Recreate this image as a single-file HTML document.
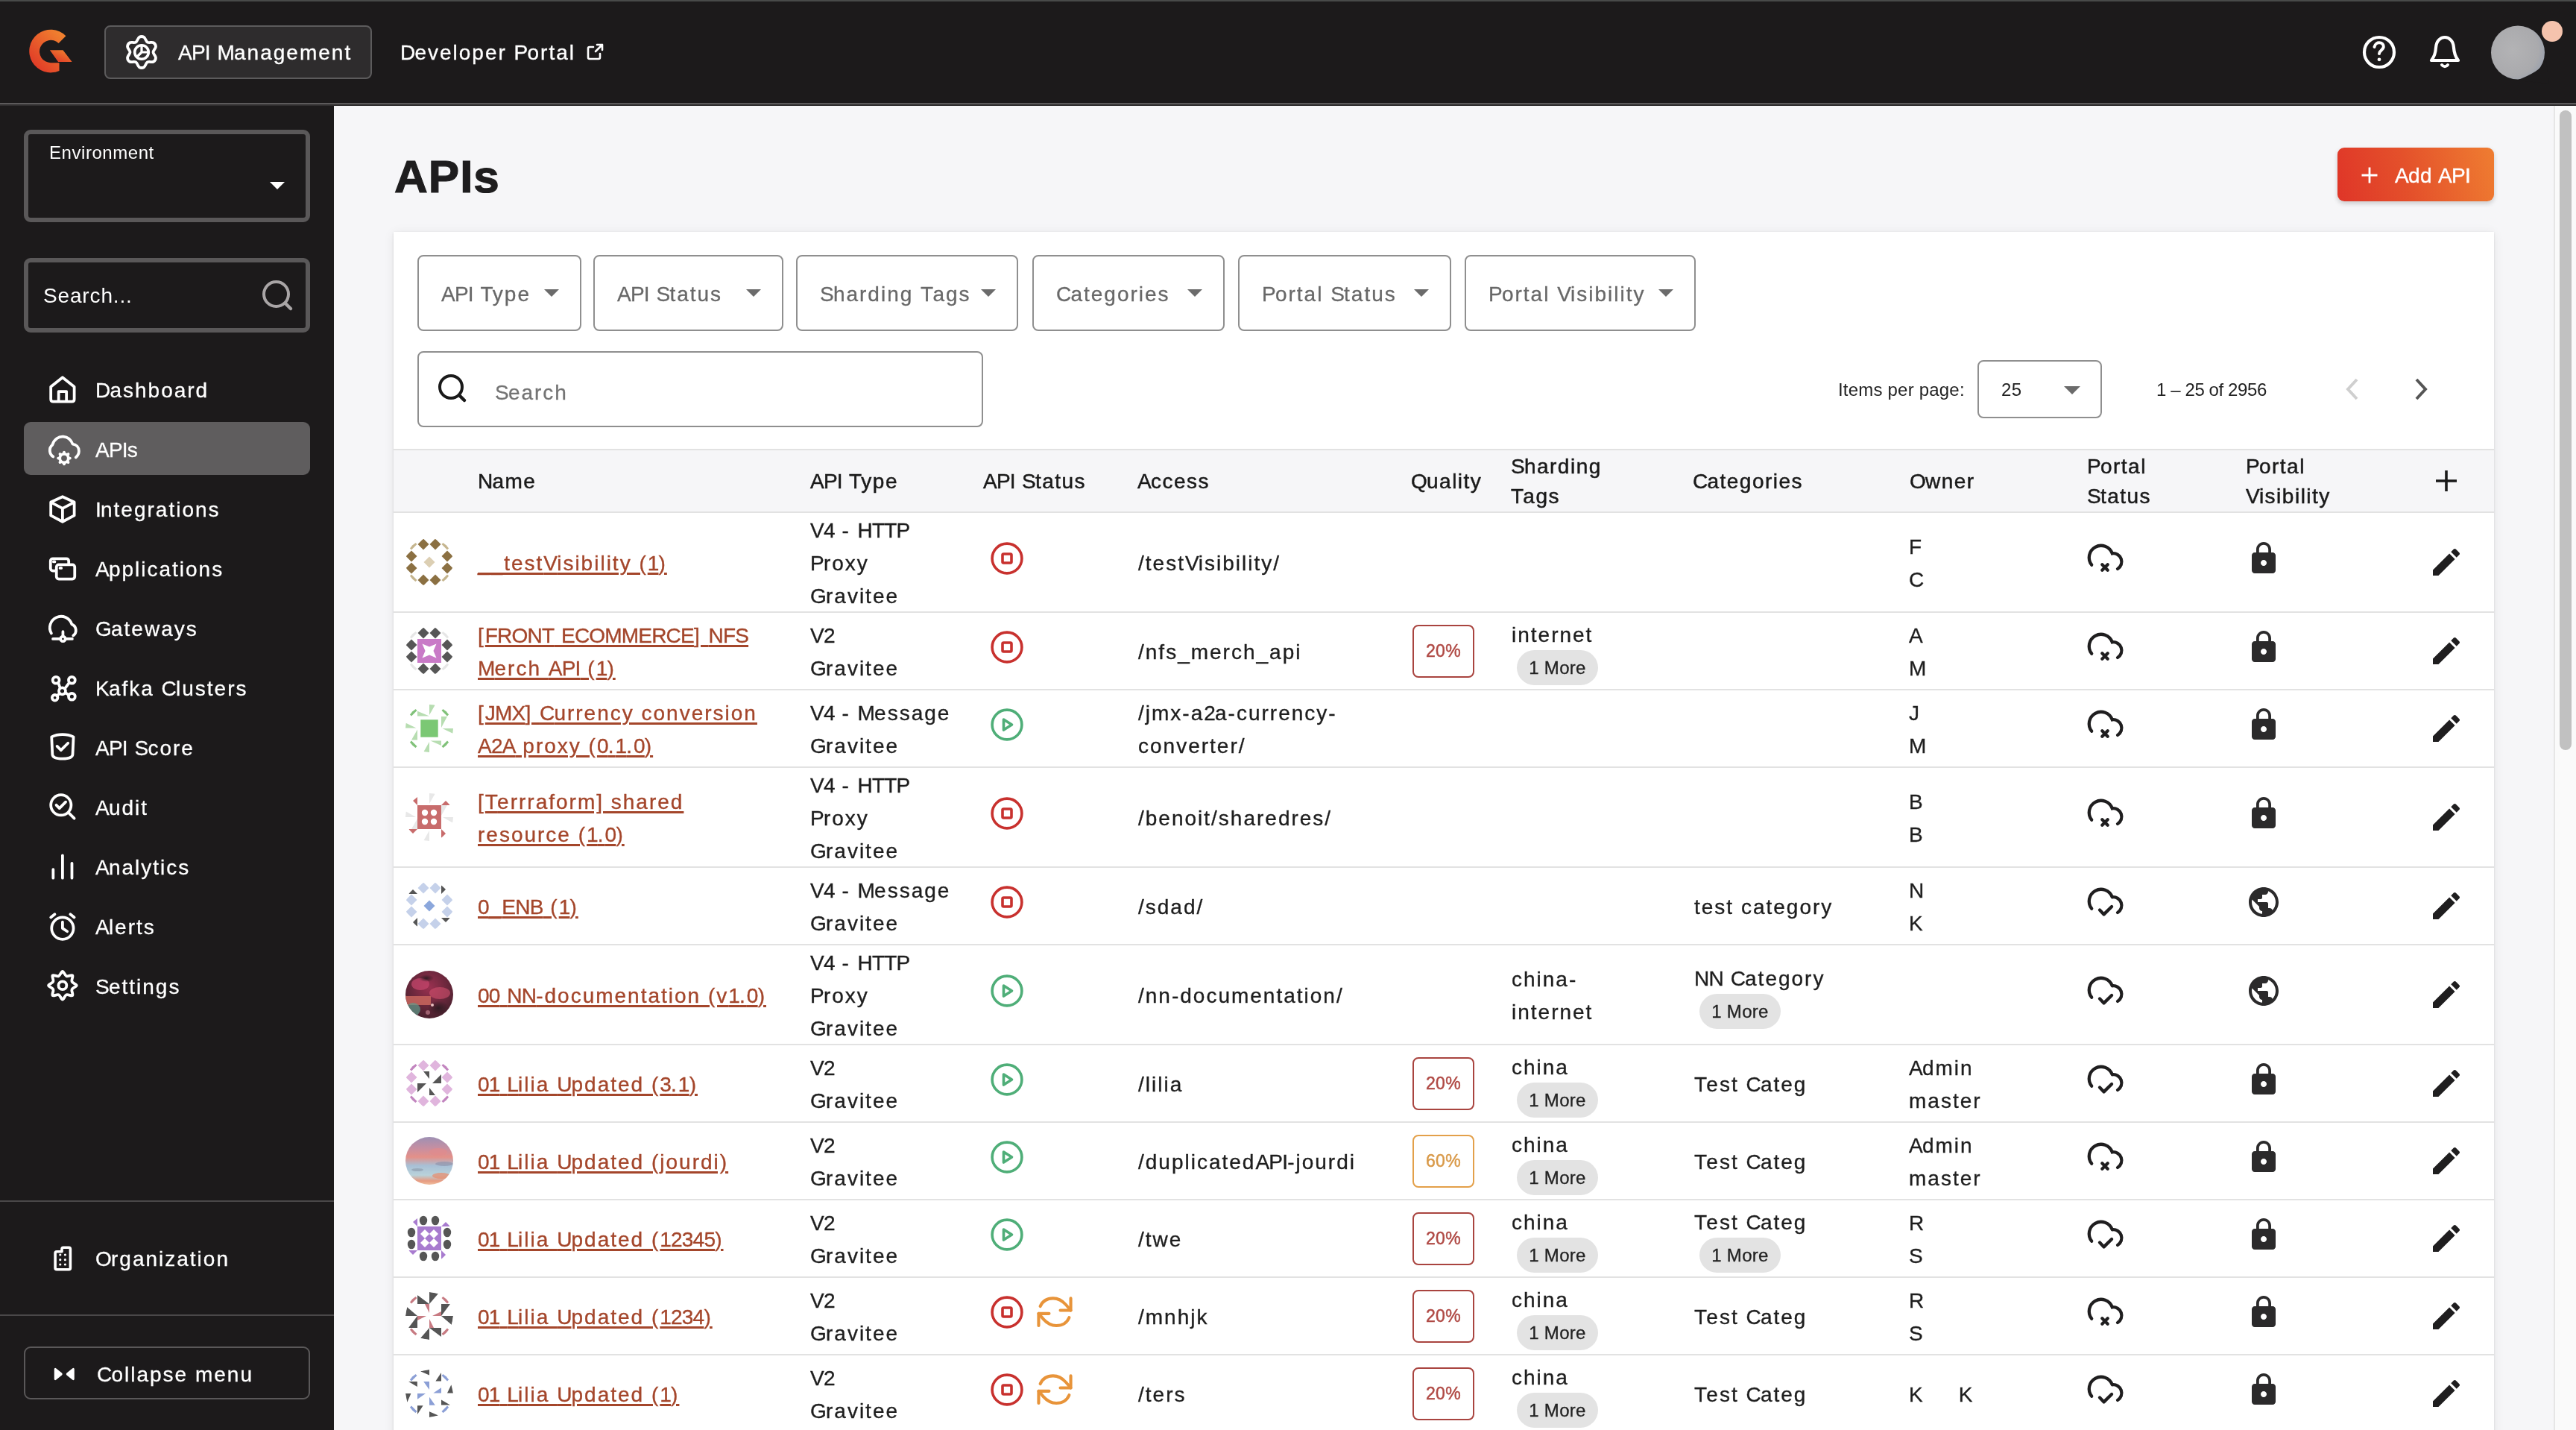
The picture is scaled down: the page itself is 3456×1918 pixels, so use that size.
<!DOCTYPE html><html><head><meta charset="utf-8"><style>
*{box-sizing:border-box;margin:0;padding:0}
html,body{width:3456px;height:1918px;overflow:hidden;background:#f6f6f8;font-family:'Liberation Sans',sans-serif;}
body>div{will-change:transform}
.a{position:absolute}
.t{position:absolute;white-space:nowrap;font-size:28px;line-height:44px;color:#1e1e1e;letter-spacing:2px;-webkit-text-stroke:0.35px currentColor}
.hd{position:absolute;white-space:nowrap;font-size:28px;line-height:40px;color:#1a1a1a;letter-spacing:1.5px;-webkit-text-stroke:0.5px #1a1a1a}
.nav{position:absolute;white-space:nowrap;font-size:28px;line-height:40px;color:#fff;letter-spacing:2px;-webkit-text-stroke:0.3px currentColor}
.lnk{color:#a4462b;text-decoration:underline;text-decoration-thickness:3px;text-underline-offset:3px}
.flt{position:absolute;top:342px;height:102px;border:2px solid #8f8f8f;border-radius:8px;background:#fff}
.flt>span{position:absolute;left:0;top:31px;font-size:28px;line-height:40px;color:#686868;letter-spacing:2px;white-space:nowrap;-webkit-text-stroke:0.3px #686868}
.car{position:absolute;width:0;height:0;border-left:10px solid transparent;border-right:10px solid transparent;border-top:10px solid #6b6b6b}
.qb{position:absolute;width:83px;height:71px;border:2px solid #b8403a;border-radius:8px;color:#b8403a;font-size:23px;line-height:67px;text-align:center;letter-spacing:0.3px;-webkit-text-stroke:0.5px currentColor}
.chip{position:absolute;height:47px;width:109px;border-radius:24px;background:#e3e3e3;color:#222;font-size:24px;line-height:47px;text-align:center;letter-spacing:0.3px;-webkit-text-stroke:0.3px #222}
.rb{position:absolute;left:528px;width:2818px;height:2px;background:#e2e2e2}
</style></head><body><div class="a" style="left:0;top:0;width:3456px;height:142px;background:#1c1a1b"></div>
<div class="a" style="left:0;top:0;width:3456px;height:2px;background:#484a49"></div>
<div class="a" style="left:0;top:138px;width:3456px;height:2px;background:#5c5a5b"></div>
<div class="a" style="left:0;top:140px;width:3456px;height:2px;background:#2f2d2e"></div>
<svg class="a" style="left:36px;top:38px" width="64" height="62" viewBox="0 0 64 62">
<defs><linearGradient id="lg" x1="0.85" y1="0.1" x2="0.15" y2="0.9"><stop offset="0" stop-color="#f0802f"/><stop offset="1" stop-color="#e03a27"/></linearGradient></defs>
<path fill="url(#lg)" d="M52.4 10.2 A28.8 28.8 0 1 0 43.5 57.0 L43.5 46.2 L32 46.2 A15.2 15.2 0 1 1 42.6 19.9 Z"/>
<path fill="url(#lg)" d="M30.9 29.2 L48.5 29.2 L60.6 45.1 L42.1 45.1 Z"/>
</svg>
<div class="a" style="left:140px;top:34px;width:359px;height:72px;border:2px solid #5c5b5c;border-radius:8px;background:#2e2c2d"></div>
<svg class="a" style="left:167px;top:46px" width="46" height="48" viewBox="0 0 46 48">
<path fill="none" stroke="#fff" stroke-width="3.8" stroke-linejoin="round" d="M19.82 3.95 C21.65 2.85 24.35 2.85 26.18 3.95 C28.00 5.05 28.65 9.36 30.75 10.58 C32.85 11.79 36.91 10.20 38.78 11.22 C40.64 12.25 42.00 14.60 41.95 16.73 C41.91 18.85 38.50 21.58 38.50 24.00 C38.50 26.42 41.91 29.15 41.95 31.27 C42.00 33.40 40.64 35.75 38.78 36.78 C36.91 37.80 32.85 36.21 30.75 37.42 C28.65 38.64 28.00 42.95 26.18 44.05 C24.35 45.15 21.65 45.15 19.82 44.05 C18.00 42.95 17.35 38.64 15.25 37.42 C13.15 36.21 9.09 37.80 7.22 36.78 C5.36 35.75 4.00 33.40 4.05 31.27 C4.09 29.15 7.50 26.42 7.50 24.00 C7.50 21.58 4.09 18.85 4.05 16.73 C4.00 14.60 5.36 12.25 7.22 11.22 C9.09 10.20 13.15 11.79 15.25 10.58 C17.35 9.36 18.00 5.05 19.82 3.95 Z"/>
<circle cx="23" cy="24" r="9.3" fill="none" stroke="#fff" stroke-width="3.6"/>
<path fill="none" stroke="#fff" stroke-width="3.2" d="M23 15 L23 24 L32 24 M23 24 L16.5 30.5"/>
</svg>
<div class="a" style="left:239px;top:51px;font-size:28px;line-height:40px;color:#fff;letter-spacing:2px;-webkit-text-stroke:0.35px #fff;white-space:nowrap"><span style="letter-spacing:-0.8px">API</span> <span style="letter-spacing:-0.8px">M</span>anagement</div>
<div class="a" style="left:537px;top:51px;font-size:28px;line-height:40px;color:#fff;letter-spacing:2px;-webkit-text-stroke:0.35px #fff;white-space:nowrap"><span style="letter-spacing:-0.8px">D</span>eveloper <span style="letter-spacing:-0.8px">P</span>ortal</div>
<svg class="a" style="left:786px;top:58px" width="26" height="24" viewBox="0 0 26 24">
<path fill="none" stroke="#fff" stroke-width="2.6" stroke-linecap="round" stroke-linejoin="round" d="M10 5 L5 5 Q3 5 3 7 L3 19 Q3 21 5 21 L17 21 Q19 21 19 19 L19 14 M13 11 L22 2 M15 2 L22 2 L22 9"/>
</svg>
<svg class="a" style="left:3168px;top:46px" width="48" height="48" viewBox="0 0 48 48">
<circle cx="24" cy="24" r="20" fill="none" stroke="#fff" stroke-width="4.2"/>
<path fill="none" stroke="#fff" stroke-width="4" stroke-linecap="round" stroke-linejoin="round" d="M17.5 17 C18.5 12.5 22 11 24.5 11.3 C28 11.6 30 14 29.8 17 C29.6 20.5 24.2 21.5 24 26"/>
<circle cx="24" cy="33.8" r="2.4" fill="#fff"/>
</svg>
<svg class="a" style="left:3256px;top:46px" width="48" height="48" viewBox="0 0 48 48">
<path fill="none" stroke="#fff" stroke-width="4.2" stroke-linejoin="round" d="M6 35 L42 35 C38 30 36.5 26 36 18 C35.5 9 30 4 24 4 C18 4 12.5 9 12 18 C11.5 26 10 30 6 35 Z"/>
<path fill="none" stroke="#fff" stroke-width="4" stroke-linecap="round" d="M20 41 C22.5 44 25.5 44 28 41"/>
</svg>
<svg class="a" style="left:3336px;top:30px" width="84" height="82" viewBox="0 0 84 82"><defs><radialGradient id="avg" cx="0.4" cy="0.45" r="0.6"><stop offset="0" stop-color="#b3b3b5"/><stop offset="0.8" stop-color="#aaaaad"/><stop offset="1" stop-color="#9ea3ad"/></radialGradient></defs><ellipse cx="42" cy="40.5" rx="36" ry="36" fill="url(#avg)"/><path d="M80 52 Q72 66 40 78 L84 82 Z" fill="#1c1a1b"/></svg>
<div class="a" style="left:3410px;top:28px;width:28px;height:28px;border-radius:50%;background:#f5c3ad"></div>
<div class="a" style="left:0;top:142px;width:448px;height:1776px;background:#1c1a1b"></div>
<div class="a" style="left:32px;top:174px;width:384px;height:124px;border:6px solid #5a5859;border-radius:9px"></div>
<div class="a" style="left:66px;top:190px;font-size:24px;line-height:30px;color:#fff;letter-spacing:0.55px;white-space:nowrap">Environment</div>
<div class="car" style="left:362px;top:244px;border-top-color:#fff"></div>
<div class="a" style="left:32px;top:346px;width:384px;height:100px;border:6px solid #5a5859;border-radius:9px"></div>
<div class="a" style="left:58px;top:377px;font-size:28px;line-height:40px;color:#fff;letter-spacing:0.85px;white-space:nowrap">Search...</div>
<svg class="a" style="left:348px;top:372px" width="48" height="48" viewBox="0 0 48 48">
<circle cx="22.5" cy="22.5" r="16.5" fill="none" stroke="#a9a5a6" stroke-width="4"/>
<path stroke="#a9a5a6" stroke-width="4.5" stroke-linecap="round" d="M35 35 L42 42"/>
</svg>
<div class="a" style="left:32px;top:566px;width:384px;height:71px;border-radius:9px;background:#5f5d5e"></div>
<svg class="a" style="left:64px;top:502px" width="44" height="42" viewBox="-1 -1 42 40" overflow="visible"><path fill="none" stroke="#fff" stroke-width="3.6" stroke-linecap="round" stroke-linejoin="round" d="M3 15 L18 3 L33 15 L33 31 Q33 34 30 34 L6 34 Q3 34 3 31 Z M13 34 L13 21 L23 21 L23 34"/></svg>
<div class="nav" style="left:128px;top:504px"><span style="letter-spacing:-0.8px">D</span>ashboard</div>
<svg class="a" style="left:64px;top:582px" width="44" height="42" viewBox="-1 -1 42 40" overflow="visible"><path fill="none" stroke="#fff" stroke-width="3.6" stroke-linecap="round" stroke-linejoin="round" d="M6 28 C1 25 0 17 5 13 C7 6 13 2 19 2.5 C25 3 29 7 31 12 C35.5 12.5 39 16 39 21 C39 24.5 37.5 27 35 29"/><circle cx="20" cy="30" r="5.5" fill="none" stroke="#fff" stroke-width="3.6" stroke-linecap="round" stroke-linejoin="round"/><path fill="none" stroke="#fff" stroke-width="3.6" stroke-linecap="round" stroke-linejoin="round" d="M20 22.5 L20 24 M20 36 L20 37.5 M12.5 30 L14 30 M26 30 L27.5 30 M14.7 24.7 L15.8 25.8 M24.2 34.2 L25.3 35.3 M14.7 35.3 L15.8 34.2 M24.2 25.8 L25.3 24.7"/></svg>
<div class="nav" style="left:128px;top:584px"><span style="letter-spacing:-0.8px">API</span>s</div>
<svg class="a" style="left:64px;top:662px" width="44" height="42" viewBox="-1 -1 42 40" overflow="visible"><path fill="none" stroke="#fff" stroke-width="3.6" stroke-linecap="round" stroke-linejoin="round" d="M18 3 L33 10 L33 27 L18 35 L3 27 L3 10 Z M3 10 L18 18 L33 10 M18 18 L18 35"/></svg>
<div class="nav" style="left:128px;top:664px"><span style="letter-spacing:-0.8px">I</span>ntegrations</div>
<svg class="a" style="left:64px;top:742px" width="44" height="42" viewBox="-1 -1 42 40" overflow="visible"><rect x="2.6" y="5.9" width="23.3" height="15.5" rx="3" fill="none" stroke="#fff" stroke-width="3.6" stroke-linecap="round" stroke-linejoin="round"/><rect x="10.2" y="13.7" width="23.4" height="18.2" rx="3" fill="#1c1a1b" stroke="#fff" stroke-width="3.6"/><path fill="none" stroke="#fff" stroke-width="3.6" stroke-linecap="round" stroke-linejoin="round" d="M6.5 9.9 L8 9.9 M14.8 18 L16.4 18"/></svg>
<div class="nav" style="left:128px;top:744px"><span style="letter-spacing:-0.8px">A</span>pplications</div>
<svg class="a" style="left:64px;top:822px" width="44" height="42" viewBox="-1 -1 42 40" overflow="visible"><path fill="none" stroke="#fff" stroke-width="3.6" stroke-linecap="round" stroke-linejoin="round" d="M3.7 25.2 A14.4 14.4 0 1 1 29.8 13.4 A8.53 8.53 0 0 1 31.7 28.1 M5.7 32.3 L15.3 32.3 M21.7 32.3 L30.4 32.3 M18.5 23 L18.5 29.2"/><circle cx="18.5" cy="32.3" r="3.1" fill="none" stroke="#fff" stroke-width="3.6" stroke-linecap="round" stroke-linejoin="round"/></svg>
<div class="nav" style="left:128px;top:824px"><span style="letter-spacing:-0.8px">G</span>ateways</div>
<svg class="a" style="left:64px;top:902px" width="44" height="42" viewBox="-1 -1 42 40" overflow="visible"><circle cx="9.6" cy="8.8" r="4.2" fill="none" stroke="#fff" stroke-width="3.6" stroke-linecap="round" stroke-linejoin="round"/><circle cx="29.9" cy="8.8" r="4.2" fill="none" stroke="#fff" stroke-width="3.6" stroke-linecap="round" stroke-linejoin="round"/><circle cx="8.2" cy="31.2" r="3.6" fill="none" stroke="#fff" stroke-width="3.6" stroke-linecap="round" stroke-linejoin="round"/><circle cx="29.9" cy="29.8" r="4.2" fill="none" stroke="#fff" stroke-width="3.6" stroke-linecap="round" stroke-linejoin="round"/><circle cx="17.6" cy="22.6" r="4.3" fill="none" stroke="#fff" stroke-width="3.6" stroke-linecap="round" stroke-linejoin="round"/><path fill="none" stroke="#fff" stroke-width="3.6" stroke-linecap="round" stroke-linejoin="round" d="M12.5 12 L15 18.8 M26.8 11.8 L20.9 19.6 M11 29 L14.2 25.6 M26.1 27.8 L21.6 24.8"/></svg>
<div class="nav" style="left:128px;top:904px"><span style="letter-spacing:-0.8px">K</span>afka <span style="letter-spacing:-0.8px">C</span>lusters</div>
<svg class="a" style="left:64px;top:982px" width="44" height="42" viewBox="-1 -1 42 40" overflow="visible"><path fill="none" stroke="#fff" stroke-width="3.6" stroke-linecap="round" stroke-linejoin="round" d="M4 5 C12 1 24 1 32 5 L31 27 C31 31 27 33 18 33 C9 33 5 31 5 27 Z"/><path fill="none" stroke="#fff" stroke-width="3.6" stroke-linecap="round" stroke-linejoin="round" d="M11 17 L16 22 L25 13"/></svg>
<div class="nav" style="left:128px;top:984px"><span style="letter-spacing:-0.8px">API</span> <span style="letter-spacing:-0.8px">S</span>core</div>
<svg class="a" style="left:64px;top:1062px" width="44" height="42" viewBox="-1 -1 42 40" overflow="visible"><circle cx="16" cy="16" r="13" fill="none" stroke="#fff" stroke-width="3.6" stroke-linecap="round" stroke-linejoin="round"/><path fill="none" stroke="#fff" stroke-width="3.6" stroke-linecap="round" stroke-linejoin="round" d="M10 16 L14 20 L22 12 M26 26 L33 33"/></svg>
<div class="nav" style="left:128px;top:1064px"><span style="letter-spacing:-0.8px">A</span>udit</div>
<svg class="a" style="left:64px;top:1142px" width="44" height="42" viewBox="-1 -1 42 40" overflow="visible"><path fill="none" stroke="#fff" stroke-width="3.6" stroke-linecap="round" stroke-linejoin="round" d="M6 22 L6 33 M18 4 L18 33 M30 14 L30 33"/></svg>
<div class="nav" style="left:128px;top:1144px"><span style="letter-spacing:-0.8px">A</span>nalytics</div>
<svg class="a" style="left:64px;top:1222px" width="44" height="42" viewBox="-1 -1 42 40" overflow="visible"><circle cx="18" cy="21" r="14" fill="none" stroke="#fff" stroke-width="3.6" stroke-linecap="round" stroke-linejoin="round"/><path fill="none" stroke="#fff" stroke-width="3.6" stroke-linecap="round" stroke-linejoin="round" d="M18 13 L18 21 L24 25 M3 7 L8 3 M33 7 L28 3"/></svg>
<div class="nav" style="left:128px;top:1224px"><span style="letter-spacing:-0.8px">A</span>lerts</div>
<svg class="a" style="left:64px;top:1302px" width="44" height="42" viewBox="-1 -1 42 40" overflow="visible"><path fill="none" stroke="#fff" stroke-width="3.6" stroke-linecap="round" stroke-linejoin="round" d="M18.00 -0.20 C19.66 -0.20 20.85 4.91 22.97 5.79 C25.10 6.67 29.56 3.90 30.73 5.07 C31.90 6.24 29.13 10.70 30.01 12.83 C30.89 14.95 36.00 16.14 36.00 17.80 C36.00 19.46 30.89 20.65 30.01 22.77 C29.13 24.90 31.90 29.36 30.73 30.53 C29.56 31.70 25.10 28.93 22.97 29.81 C20.85 30.69 19.66 35.80 18.00 35.80 C16.34 35.80 15.15 30.69 13.03 29.81 C10.90 28.93 6.44 31.70 5.27 30.53 C4.10 29.36 6.87 24.90 5.99 22.77 C5.11 20.65 0.00 19.46 0.00 17.80 C-0.00 16.14 5.11 14.95 5.99 12.83 C6.87 10.70 4.10 6.24 5.27 5.07 C6.44 3.90 10.90 6.67 13.03 5.79 C15.15 4.91 16.34 -0.20 18.00 -0.20 Z"/><circle cx="18" cy="17.8" r="5.2" fill="none" stroke="#fff" stroke-width="3.6" stroke-linecap="round" stroke-linejoin="round"/></svg>
<div class="nav" style="left:128px;top:1304px"><span style="letter-spacing:-0.8px">S</span>ettings</div>
<div class="a" style="left:0;top:1610px;width:448px;height:2px;background:#4a4849"></div>
<div class="a" style="left:0;top:1763px;width:448px;height:2px;background:#4a4849"></div>
<svg class="a" style="left:70px;top:1668px" width="28" height="42" viewBox="0 0 28 42"><path fill="none" stroke="#fff" stroke-width="3.6" stroke-linecap="round" stroke-linejoin="round" d="M4.1 12.8 Q4.1 10.8 6.1 10.8 L13 10.8 L13 7.3 Q13 5.3 15 5.3 L22.4 5.3 Q24.4 5.3 24.4 7.3 L24.4 32.8 Q24.4 34.8 22.4 34.8 L6.1 34.8 Q4.1 34.8 4.1 32.8 Z"/><g fill="#fff"><circle cx="10.8" cy="15" r="1.6"/><circle cx="17.4" cy="15" r="1.6"/><circle cx="10.8" cy="21.7" r="1.6"/><circle cx="17.4" cy="21.7" r="1.6"/><circle cx="10.8" cy="28" r="1.6"/><circle cx="17.4" cy="28" r="1.6"/></g></svg>
<div class="nav" style="left:128px;top:1669px"><span style="letter-spacing:-0.8px">O</span>rganization</div>
<div class="a" style="left:32px;top:1806px;width:384px;height:71px;border:2px solid #5a5859;border-radius:9px"></div>
<svg class="a" style="left:72px;top:1834px" width="30" height="18" viewBox="0 0 30 18"><path fill="#fff" stroke="#fff" stroke-width="1.5" stroke-linejoin="round" d="M1.5 2.5 Q1.5 1 3 2 L10.5 8 Q11.5 9 10.5 10 L3 16 Q1.5 17 1.5 15.5 Z M27 2.5 Q27 1 25.5 2 L18 8 Q17 9 18 10 L25.5 16 Q27 17 27 15.5 Z"/></svg>
<div class="nav" style="left:130px;top:1824px"><span style="letter-spacing:-0.8px">C</span>ollapse menu</div>
<div class="a" style="left:448px;top:142px;width:3008px;height:1776px;background:#f6f6f8"></div>
<div class="a" style="left:529px;top:197px;font-size:62px;line-height:80px;font-weight:700;color:#1e1d1e;letter-spacing:1px;-webkit-text-stroke:1.2px #1e1d1e;white-space:nowrap">APIs</div>
<div class="a" style="left:3136px;top:198px;width:210px;height:72px;border-radius:9px;background:linear-gradient(75deg,#df3528 0%,#e4512b 45%,#ef7d31 100%);box-shadow:0 3px 6px rgba(0,0,0,0.18)"></div>
<svg class="a" style="left:3166px;top:222px" width="26" height="26" viewBox="0 0 26 26"><path stroke="#fff" stroke-width="2.8" d="M13 2.5 L13 23.5 M2.5 13 L23.5 13"/></svg>
<div class="a" style="left:3213px;top:216px;font-size:28px;line-height:40px;color:#fff;letter-spacing:0.3px;-webkit-text-stroke:0.4px #fff;white-space:nowrap"><span style="letter-spacing:-0.6px">A</span>dd <span style="letter-spacing:-0.6px">API</span></div>
<div class="a" style="left:528px;top:311px;width:2818px;height:1700px;background:#fff;box-shadow:0 1px 3px rgba(0,0,0,0.12),0 2px 14px rgba(0,0,0,0.08)"></div>
<div class="flt" style="left:560px;width:220px"><span style="left:30px"><span style="letter-spacing:-0.8px">API</span> <span style="letter-spacing:-0.8px">T</span>ype</span><div class="car" style="left:168px;top:44px"></div></div>
<div class="flt" style="left:796px;width:255px"><span style="left:30px"><span style="letter-spacing:-0.8px">API</span> <span style="letter-spacing:-0.8px">S</span>tatus</span><div class="car" style="left:203px;top:44px"></div></div>
<div class="flt" style="left:1068px;width:298px"><span style="left:30px"><span style="letter-spacing:-0.8px">S</span>harding <span style="letter-spacing:-0.8px">T</span>ags</span><div class="car" style="left:246px;top:44px"></div></div>
<div class="flt" style="left:1385px;width:258px"><span style="left:30px"><span style="letter-spacing:-0.8px">C</span>ategories</span><div class="car" style="left:206px;top:44px"></div></div>
<div class="flt" style="left:1661px;width:286px"><span style="left:30px"><span style="letter-spacing:-0.8px">P</span>ortal <span style="letter-spacing:-0.8px">S</span>tatus</span><div class="car" style="left:234px;top:44px"></div></div>
<div class="flt" style="left:1965px;width:310px"><span style="left:30px"><span style="letter-spacing:-0.8px">P</span>ortal <span style="letter-spacing:-0.8px">V</span>isibility</span><div class="car" style="left:258px;top:44px"></div></div>
<div class="a" style="left:560px;top:471px;width:759px;height:102px;border:2px solid #8f8f8f;border-radius:8px;background:#fff"></div>
<svg class="a" style="left:584px;top:498px" width="48" height="48" viewBox="0 0 48 48"><circle cx="21" cy="21" r="15" fill="none" stroke="#1a1a1a" stroke-width="4"/><path stroke="#1a1a1a" stroke-width="4.5" stroke-linecap="round" d="M32 32 L39 39"/></svg>
<div class="a" style="left:664px;top:507px;font-size:28px;line-height:40px;color:#747474;letter-spacing:2px;-webkit-text-stroke:0.3px #747474;white-space:nowrap"><span style="letter-spacing:-0.8px">S</span>earch</div>
<div class="a" style="left:2466px;top:506px;font-size:24px;line-height:34px;color:#222;letter-spacing:0.2px;white-space:nowrap">Items per page:</div>
<div class="a" style="left:2653px;top:483px;width:167px;height:78px;border:2px solid #8f8f8f;border-radius:8px"></div>
<div class="a" style="left:2685px;top:506px;font-size:24px;line-height:34px;color:#222;letter-spacing:0.5px;white-space:nowrap">25</div>
<div class="car" style="left:2769px;top:518px;border-left-width:11px;border-right-width:11px;border-top-width:11px;border-top-color:#6b6b6b"></div>
<div class="a" style="left:2893px;top:506px;font-size:24px;line-height:34px;color:#222;letter-spacing:-0.4px;white-space:nowrap">1 – 25 of 2956</div>
<svg class="a" style="left:3144px;top:505px" width="24" height="34" viewBox="0 0 24 34"><path fill="none" stroke="#cfcfcf" stroke-width="4" d="M18 4 L6 17 L18 30"/></svg>
<svg class="a" style="left:3236px;top:505px" width="24" height="34" viewBox="0 0 24 34"><path fill="none" stroke="#555" stroke-width="4" d="M6 4 L18 17 L6 30"/></svg>
<div class="a" style="left:528px;top:602px;width:2818px;height:86px;background:#f6f6f8"></div>
<div class="rb" style="top:602px"></div>
<div class="rb" style="top:686px"></div>
<div class="hd" style="left:641px;top:626px"><span style="letter-spacing:-0.8px">N</span>ame</div>
<div class="hd" style="left:1087px;top:626px"><span style="letter-spacing:-0.8px">API</span> <span style="letter-spacing:-0.8px">T</span>ype</div>
<div class="hd" style="left:1319px;top:626px"><span style="letter-spacing:-0.8px">API</span> <span style="letter-spacing:-0.8px">S</span>tatus</div>
<div class="hd" style="left:1526px;top:626px"><span style="letter-spacing:-0.8px">A</span>ccess</div>
<div class="hd" style="left:1893px;top:626px"><span style="letter-spacing:-0.8px">Q</span>uality</div>
<div class="hd" style="left:2027px;top:606px"><span style="letter-spacing:-0.8px">S</span>harding<br><span style="letter-spacing:-0.8px">T</span>ags</div>
<div class="hd" style="left:2271px;top:626px"><span style="letter-spacing:-0.8px">C</span>ategories</div>
<div class="hd" style="left:2562px;top:626px"><span style="letter-spacing:-0.8px">O</span>wner</div>
<div class="hd" style="left:2800px;top:606px"><span style="letter-spacing:-0.8px">P</span>ortal<br><span style="letter-spacing:-0.8px">S</span>tatus</div>
<div class="hd" style="left:3013px;top:606px"><span style="letter-spacing:-0.8px">P</span>ortal<br><span style="letter-spacing:-0.8px">V</span>isibility</div>
<svg class="a" style="left:3267px;top:630px" width="30" height="30" viewBox="0 0 30 30"><path stroke="#1a1a1a" stroke-width="3.6" d="M15 1 L15 29 M1 15 L29 15"/></svg>
<div class="rb" style="top:820px"></div>
<div class="rb" style="top:924px"></div>
<div class="rb" style="top:1028px"></div>
<div class="rb" style="top:1162px"></div>
<div class="rb" style="top:1266px"></div>
<div class="rb" style="top:1400px"></div>
<div class="rb" style="top:1504px"></div>
<div class="rb" style="top:1608px"></div>
<div class="rb" style="top:1712px"></div>
<div class="rb" style="top:1816px"></div>
<svg class="a" style="left:544px;top:722px" width="64" height="64" viewBox="0 0 64 64"><defs><clipPath id="c0"><circle cx="32" cy="32" r="32"/></clipPath></defs><g clip-path="url(#c0)"><path fill="#8b7042" d="M24 0.5 L31.5 8 L24 15.5 L16.5 8 Z"/><path fill="#8b7042" d="M40 0.5 L47.5 8 L40 15.5 L32.5 8 Z"/><path fill="#8b7042" d="M8 16.5 L15.5 24 L8 31.5 L0.5 24 Z"/><path fill="#8b7042" d="M8 32.5 L15.5 40 L8 47.5 L0.5 40 Z"/><path fill="#8b7042" d="M56 16.5 L63.5 24 L56 31.5 L48.5 24 Z"/><path fill="#8b7042" d="M56 32.5 L63.5 40 L56 47.5 L48.5 40 Z"/><path fill="#8b7042" d="M24 48.5 L31.5 56 L24 63.5 L16.5 56 Z"/><path fill="#8b7042" d="M40 48.5 L47.5 56 L40 63.5 L32.5 56 Z"/><path fill="#c5b58e" d="M8 0.5 L15.5 8 L8 15.5 L0.5 8 Z"/><path fill="#c5b58e" d="M56 0.5 L63.5 8 L56 15.5 L48.5 8 Z"/><path fill="#c5b58e" d="M8 48.5 L15.5 56 L8 63.5 L0.5 56 Z"/><path fill="#c5b58e" d="M56 48.5 L63.5 56 L56 63.5 L48.5 56 Z"/><path fill="#dccfb3" d="M32 24.5 L39.5 32 L32 39.5 L24.5 32 Z"/></g></svg>
<div class="t lnk" style="left:641px;top:734.0px">__test<span style="letter-spacing:-0.8px">V</span>isibility (<span style="letter-spacing:-0.8px">1</span>)</div>
<div class="t" style="left:1087px;top:690.0px;"><span style="letter-spacing:-0.8px">V4</span> - <span style="letter-spacing:-0.8px">HTTP</span><br><span style="letter-spacing:-0.8px">P</span>roxy<br><span style="letter-spacing:-0.8px">G</span>ravitee</div>
<svg class="a" style="left:1327px;top:725px" width="48" height="48" viewBox="0 0 48 48"><circle cx="24" cy="24" r="19.9" fill="none" stroke="#c8312e" stroke-width="3.6"/><rect x="18" y="18" width="12" height="12" rx="1.5" fill="none" stroke="#c8312e" stroke-width="3.6"/></svg>
<div class="t" style="left:1527px;top:734.0px;">/test<span style="letter-spacing:-0.8px">V</span>isibility/</div>
<div class="t" style="left:2561px;top:712.0px;"><span style="letter-spacing:-0.8px">F</span><br><span style="letter-spacing:-0.8px">C</span></div>
<svg class="a" style="left:2798px;top:726px" width="52" height="48" viewBox="0 0 52 48"><g fill="none" stroke="#1f1e1f" stroke-width="4.3" stroke-linecap="round"><path d="M8.2 31.7 A16 16 0 1 1 35.8 16.3 A11.2 11.2 0 0 1 43 37"/><path d="M22.3 31.3 L29.7 38.7 M29.7 31.3 L22.3 38.7"/></g></svg>
<svg class="a" style="left:3013px;top:725px" width="48" height="48" viewBox="0 0 24 24"><path fill="#2b2a2b" d="M18 8h-1V6c0-2.76-2.24-5-5-5S7 3.24 7 6v2H6c-1.1 0-2 .9-2 2v10c0 1.1.9 2 2 2h12c1.1 0 2-.9 2-2V10c0-1.1-.9-2-2-2zm-6 9c-1.1 0-2-.9-2-2s.9-2 2-2 2 .9 2 2-.9 2-2 2zm3.1-9H8.9V6c0-1.71 1.39-3.1 3.1-3.1 1.71 0 3.1 1.39 3.1 3.1v2z"/></svg>
<svg class="a" style="left:3258px;top:730px" width="48" height="48" viewBox="0 0 24 24"><path fill="#1f1e1f" d="M3 17.25V21h3.75L17.81 9.94l-3.75-3.75L3 17.25zM20.71 7.04c.39-.39.39-1.02 0-1.41l-2.34-2.34c-.39-.39-1.02-.39-1.41 0l-1.83 1.83 3.75 3.75 1.83-1.83z"/></svg>
<svg class="a" style="left:544px;top:841px" width="64" height="64" viewBox="0 0 64 64"><defs><clipPath id="c1"><circle cx="32" cy="32" r="32"/></clipPath></defs><g clip-path="url(#c1)"><path fill="#565656" d="M24 0.5 L31.5 8 L24 15.5 L16.5 8 Z"/><path fill="#565656" d="M40 0.5 L47.5 8 L40 15.5 L32.5 8 Z"/><path fill="#565656" d="M8 16.5 L15.5 24 L8 31.5 L0.5 24 Z"/><path fill="#565656" d="M8 32.5 L15.5 40 L8 47.5 L0.5 40 Z"/><path fill="#565656" d="M56 16.5 L63.5 24 L56 31.5 L48.5 24 Z"/><path fill="#565656" d="M56 32.5 L63.5 40 L56 47.5 L48.5 40 Z"/><path fill="#565656" d="M24 48.5 L31.5 56 L24 63.5 L16.5 56 Z"/><path fill="#565656" d="M40 48.5 L47.5 56 L40 63.5 L32.5 56 Z"/><path fill="#e6e6e6" d="M8 0.5 L15.5 8 L8 15.5 L0.5 8 Z"/><path fill="#e6e6e6" d="M56 0.5 L63.5 8 L56 15.5 L48.5 8 Z"/><path fill="#e6e6e6" d="M8 48.5 L15.5 56 L8 63.5 L0.5 56 Z"/><path fill="#e6e6e6" d="M56 48.5 L63.5 56 L56 63.5 L48.5 56 Z"/><rect x="16" y="16" width="32" height="32" fill="#c97ac7"/><path fill="#fff" d="M22.5 22.5 L32 26.5 L41.5 22.5 L37.5 32 L41.5 41.5 L32 37.5 L22.5 41.5 L26.5 32 Z"/></g></svg>
<div class="t lnk" style="left:641px;top:831.0px">[<span style="letter-spacing:-0.8px">FRONT</span> <span style="letter-spacing:-0.8px">ECOMMERCE</span>] <span style="letter-spacing:-0.8px">NFS</span><br><span style="letter-spacing:-0.8px">M</span>erch <span style="letter-spacing:-0.8px">API</span> (<span style="letter-spacing:-0.8px">1</span>)</div>
<div class="t" style="left:1087px;top:831.0px;"><span style="letter-spacing:-0.8px">V2</span><br><span style="letter-spacing:-0.8px">G</span>ravitee</div>
<svg class="a" style="left:1327px;top:844px" width="48" height="48" viewBox="0 0 48 48"><circle cx="24" cy="24" r="19.9" fill="none" stroke="#c8312e" stroke-width="3.6"/><rect x="18" y="18" width="12" height="12" rx="1.5" fill="none" stroke="#c8312e" stroke-width="3.6"/></svg>
<div class="t" style="left:1527px;top:853.0px;">/nfs_merch_api</div>
<div class="qb" style="left:1895px;top:837.5px;border-color:#a9443f;color:#b04a45">20%</div>
<div class="t" style="left:2028px;top:829.5px">internet</div><div class="chip" style="left:2035px;top:871.5px">1 More</div>
<div class="t" style="left:2561px;top:831.0px;"><span style="letter-spacing:-0.8px">A</span><br><span style="letter-spacing:-0.8px">M</span></div>
<svg class="a" style="left:2798px;top:845px" width="52" height="48" viewBox="0 0 52 48"><g fill="none" stroke="#1f1e1f" stroke-width="4.3" stroke-linecap="round"><path d="M8.2 31.7 A16 16 0 1 1 35.8 16.3 A11.2 11.2 0 0 1 43 37"/><path d="M22.3 31.3 L29.7 38.7 M29.7 31.3 L22.3 38.7"/></g></svg>
<svg class="a" style="left:3013px;top:844px" width="48" height="48" viewBox="0 0 24 24"><path fill="#2b2a2b" d="M18 8h-1V6c0-2.76-2.24-5-5-5S7 3.24 7 6v2H6c-1.1 0-2 .9-2 2v10c0 1.1.9 2 2 2h12c1.1 0 2-.9 2-2V10c0-1.1-.9-2-2-2zm-6 9c-1.1 0-2-.9-2-2s.9-2 2-2 2 .9 2 2-.9 2-2 2zm3.1-9H8.9V6c0-1.71 1.39-3.1 3.1-3.1 1.71 0 3.1 1.39 3.1 3.1v2z"/></svg>
<svg class="a" style="left:3258px;top:849px" width="48" height="48" viewBox="0 0 24 24"><path fill="#1f1e1f" d="M3 17.25V21h3.75L17.81 9.94l-3.75-3.75L3 17.25zM20.71 7.04c.39-.39.39-1.02 0-1.41l-2.34-2.34c-.39-.39-1.02-.39-1.41 0l-1.83 1.83 3.75 3.75 1.83-1.83z"/></svg>
<svg class="a" style="left:544px;top:945px" width="64" height="64" viewBox="0 0 64 64"><defs><clipPath id="c2"><circle cx="32" cy="32" r="32"/></clipPath></defs><g clip-path="url(#c2)"><path fill="#b7ddb1" d="M16 8.8 L16 15.6 L32 15.6 Z"/><path fill="#b7ddb1" d="M32 0 L40 0 L32 14 Z"/><path fill="#b7ddb1" d="M48 16 L56 16 L48 31 Z"/><path fill="#b7ddb1" d="M49.5 32 L64 32 L64 39 Z"/><path fill="#b7ddb1" d="M33.5 48.4 L48 48.4 L48 55 Z"/><path fill="#b7ddb1" d="M24 64 L32 50 L32 64 Z"/><path fill="#b7ddb1" d="M8 47.6 L16 33.5 L16 47.6 Z"/><path fill="#b7ddb1" d="M0 24.5 L14.5 31.5 L0 31.5 Z"/><path fill="#80c179" d="M8 0.5 L15.5 8 L8 15.5 L0.5 8 Z"/><path fill="#80c179" d="M56 0.5 L63.5 8 L56 15.5 L48.5 8 Z"/><path fill="#80c179" d="M8 48.5 L15.5 56 L8 63.5 L0.5 56 Z"/><path fill="#80c179" d="M56 48.5 L63.5 56 L56 63.5 L48.5 56 Z"/><rect x="20.3" y="20.3" width="23.4" height="23.4" fill="#7bc874"/></g></svg>
<div class="t lnk" style="left:641px;top:935.0px">[<span style="letter-spacing:-0.8px">JMX</span>] <span style="letter-spacing:-0.8px">C</span>urrency conversion<br><span style="letter-spacing:-0.8px">A2A</span> proxy (<span style="letter-spacing:-0.8px">0</span>.<span style="letter-spacing:-0.8px">1</span>.<span style="letter-spacing:-0.8px">0</span>)</div>
<div class="t" style="left:1087px;top:935.0px;"><span style="letter-spacing:-0.8px">V4</span> - <span style="letter-spacing:-0.8px">M</span>essage<br><span style="letter-spacing:-0.8px">G</span>ravitee</div>
<svg class="a" style="left:1327px;top:948px" width="48" height="48" viewBox="0 0 48 48"><circle cx="24" cy="24" r="19.9" fill="none" stroke="#4fae78" stroke-width="3.6"/><path d="M19.5 17 L30.5 24 L19.5 31 Z" fill="none" stroke="#4fae78" stroke-width="3.6" stroke-linejoin="round"/></svg>
<div class="t" style="left:1527px;top:935.0px;">/jmx-a<span style="letter-spacing:-0.8px">2</span>a-currency-<br>converter/</div>
<div class="t" style="left:2561px;top:935.0px;"><span style="letter-spacing:-0.8px">J</span><br><span style="letter-spacing:-0.8px">M</span></div>
<svg class="a" style="left:2798px;top:949px" width="52" height="48" viewBox="0 0 52 48"><g fill="none" stroke="#1f1e1f" stroke-width="4.3" stroke-linecap="round"><path d="M8.2 31.7 A16 16 0 1 1 35.8 16.3 A11.2 11.2 0 0 1 43 37"/><path d="M22.3 31.3 L29.7 38.7 M29.7 31.3 L22.3 38.7"/></g></svg>
<svg class="a" style="left:3013px;top:948px" width="48" height="48" viewBox="0 0 24 24"><path fill="#2b2a2b" d="M18 8h-1V6c0-2.76-2.24-5-5-5S7 3.24 7 6v2H6c-1.1 0-2 .9-2 2v10c0 1.1.9 2 2 2h12c1.1 0 2-.9 2-2V10c0-1.1-.9-2-2-2zm-6 9c-1.1 0-2-.9-2-2s.9-2 2-2 2 .9 2 2-.9 2-2 2zm3.1-9H8.9V6c0-1.71 1.39-3.1 3.1-3.1 1.71 0 3.1 1.39 3.1 3.1v2z"/></svg>
<svg class="a" style="left:3258px;top:953px" width="48" height="48" viewBox="0 0 24 24"><path fill="#1f1e1f" d="M3 17.25V21h3.75L17.81 9.94l-3.75-3.75L3 17.25zM20.71 7.04c.39-.39.39-1.02 0-1.41l-2.34-2.34c-.39-.39-1.02-.39-1.41 0l-1.83 1.83 3.75 3.75 1.83-1.83z"/></svg>
<svg class="a" style="left:544px;top:1064px" width="64" height="64" viewBox="0 0 64 64"><defs><clipPath id="c3"><circle cx="32" cy="32" r="32"/></clipPath></defs><g clip-path="url(#c3)"><path fill="#e8e8e8" d="M32 0 L40 0 L32 14 Z"/><path fill="#e8e8e8" d="M48 16 L48 30 L56 16 Z"/><path fill="#e8e8e8" d="M64 32 L64 40 L50 32 Z"/><path fill="#e8e8e8" d="M48 48 L34 40 L48 40 Z"/><path fill="#e8e8e8" d="M32 64 L24 64 L32 50 Z"/><path fill="#e8e8e8" d="M16 48 L16 34 L8 48 Z"/><path fill="#e8e8e8" d="M0 32 L0 24 L14 32 Z"/><path fill="#e8e8e8" d="M16 16 L30 24 L16 24 Z"/><path fill="#c86c6c" d="M16 5 L16 16 L10 10 Z"/><path fill="#c86c6c" d="M48 16 L60 16 L54 10 Z"/><path fill="#c86c6c" d="M48 48 L48 60 L54 54 Z"/><path fill="#c86c6c" d="M16 48 L4 48 L10 54 Z"/><rect x="16" y="16" width="32" height="32" fill="#c86c6c"/><g fill="#fff"><circle cx="26" cy="26" r="4.2"/><circle cx="38" cy="26" r="4.2"/><circle cx="26" cy="38" r="4.2"/><circle cx="38" cy="38" r="4.2"/></g></g></svg>
<div class="t lnk" style="left:641px;top:1054.0px">[<span style="letter-spacing:-0.8px">T</span>errraform] shared<br>resource (<span style="letter-spacing:-0.8px">1</span>.<span style="letter-spacing:-0.8px">0</span>)</div>
<div class="t" style="left:1087px;top:1032.0px;"><span style="letter-spacing:-0.8px">V4</span> - <span style="letter-spacing:-0.8px">HTTP</span><br><span style="letter-spacing:-0.8px">P</span>roxy<br><span style="letter-spacing:-0.8px">G</span>ravitee</div>
<svg class="a" style="left:1327px;top:1067px" width="48" height="48" viewBox="0 0 48 48"><circle cx="24" cy="24" r="19.9" fill="none" stroke="#c8312e" stroke-width="3.6"/><rect x="18" y="18" width="12" height="12" rx="1.5" fill="none" stroke="#c8312e" stroke-width="3.6"/></svg>
<div class="t" style="left:1527px;top:1076.0px;">/benoit/sharedres/</div>
<div class="t" style="left:2561px;top:1054.0px;"><span style="letter-spacing:-0.8px">B</span><br><span style="letter-spacing:-0.8px">B</span></div>
<svg class="a" style="left:2798px;top:1068px" width="52" height="48" viewBox="0 0 52 48"><g fill="none" stroke="#1f1e1f" stroke-width="4.3" stroke-linecap="round"><path d="M8.2 31.7 A16 16 0 1 1 35.8 16.3 A11.2 11.2 0 0 1 43 37"/><path d="M22.3 31.3 L29.7 38.7 M29.7 31.3 L22.3 38.7"/></g></svg>
<svg class="a" style="left:3013px;top:1067px" width="48" height="48" viewBox="0 0 24 24"><path fill="#2b2a2b" d="M18 8h-1V6c0-2.76-2.24-5-5-5S7 3.24 7 6v2H6c-1.1 0-2 .9-2 2v10c0 1.1.9 2 2 2h12c1.1 0 2-.9 2-2V10c0-1.1-.9-2-2-2zm-6 9c-1.1 0-2-.9-2-2s.9-2 2-2 2 .9 2 2-.9 2-2 2zm3.1-9H8.9V6c0-1.71 1.39-3.1 3.1-3.1 1.71 0 3.1 1.39 3.1 3.1v2z"/></svg>
<svg class="a" style="left:3258px;top:1072px" width="48" height="48" viewBox="0 0 24 24"><path fill="#1f1e1f" d="M3 17.25V21h3.75L17.81 9.94l-3.75-3.75L3 17.25zM20.71 7.04c.39-.39.39-1.02 0-1.41l-2.34-2.34c-.39-.39-1.02-.39-1.41 0l-1.83 1.83 3.75 3.75 1.83-1.83z"/></svg>
<svg class="a" style="left:544px;top:1183px" width="64" height="64" viewBox="0 0 64 64"><defs><clipPath id="c4"><circle cx="32" cy="32" r="32"/></clipPath></defs><g clip-path="url(#c4)"><path fill="#c5d1ea" d="M24 0.5 L31.5 8 L24 15.5 L16.5 8 Z"/><path fill="#c5d1ea" d="M40 0.5 L47.5 8 L40 15.5 L32.5 8 Z"/><path fill="#c5d1ea" d="M8 16.5 L15.5 24 L8 31.5 L0.5 24 Z"/><path fill="#c5d1ea" d="M8 32.5 L15.5 40 L8 47.5 L0.5 40 Z"/><path fill="#c5d1ea" d="M56 16.5 L63.5 24 L56 31.5 L48.5 24 Z"/><path fill="#c5d1ea" d="M56 32.5 L63.5 40 L56 47.5 L48.5 40 Z"/><path fill="#c5d1ea" d="M24 48.5 L31.5 56 L24 63.5 L16.5 56 Z"/><path fill="#c5d1ea" d="M40 48.5 L47.5 56 L40 63.5 L32.5 56 Z"/><path fill="#8ba7dc" d="M32 24.5 L39.5 32 L32 39.5 L24.5 32 Z"/><path fill="#555" d="M4 16 L16 16 L10 10 Z"/><path fill="#555" d="M48 4 L48 16 L54 10 Z"/><path fill="#555" d="M48 48 L60 48 L54 54 Z"/><path fill="#555" d="M16 48 L16 60 L10 54 Z"/></g></svg>
<div class="t lnk" style="left:641px;top:1195.0px"><span style="letter-spacing:-0.8px">0</span>_<span style="letter-spacing:-0.8px">ENB</span> (<span style="letter-spacing:-0.8px">1</span>)</div>
<div class="t" style="left:1087px;top:1173.0px;"><span style="letter-spacing:-0.8px">V4</span> - <span style="letter-spacing:-0.8px">M</span>essage<br><span style="letter-spacing:-0.8px">G</span>ravitee</div>
<svg class="a" style="left:1327px;top:1186px" width="48" height="48" viewBox="0 0 48 48"><circle cx="24" cy="24" r="19.9" fill="none" stroke="#c8312e" stroke-width="3.6"/><rect x="18" y="18" width="12" height="12" rx="1.5" fill="none" stroke="#c8312e" stroke-width="3.6"/></svg>
<div class="t" style="left:1527px;top:1195.0px;">/sdad/</div>
<div class="t" style="left:2273px;top:1195.0px">test category</div>
<div class="t" style="left:2561px;top:1173.0px;"><span style="letter-spacing:-0.8px">N</span><br><span style="letter-spacing:-0.8px">K</span></div>
<svg class="a" style="left:2798px;top:1187px" width="52" height="48" viewBox="0 0 52 48"><g fill="none" stroke="#1f1e1f" stroke-width="4.3" stroke-linecap="round" stroke-linejoin="round"><path d="M8.2 31.7 A16 16 0 1 1 35.8 16.3 A11.2 11.2 0 0 1 43 37"/><path d="M19 33.6 L24.6 39.4 L35.1 29"/></g></svg>
<svg class="a" style="left:3013px;top:1186px" width="48" height="48" viewBox="0 0 24 24"><path fill="#2b2a2b" d="M12 2C6.48 2 2 6.48 2 12s4.48 10 10 10 10-4.48 10-10S17.52 2 12 2zm-1 17.93c-3.95-.49-7-3.85-7-7.93 0-.62.08-1.21.21-1.79L9 15v1c0 1.1.9 2 2 2v1.93zm6.9-2.54c-.26-.81-1-1.39-1.9-1.39h-1v-3c0-.55-.45-1-1-1H8v-2h2c.55 0 1-.45 1-1V7h2c1.1 0 2-.9 2-2v-.41c2.93 1.19 5 4.06 5 7.41 0 2.08-.8 3.97-2.1 5.39z"/></svg>
<svg class="a" style="left:3258px;top:1191px" width="48" height="48" viewBox="0 0 24 24"><path fill="#1f1e1f" d="M3 17.25V21h3.75L17.81 9.94l-3.75-3.75L3 17.25zM20.71 7.04c.39-.39.39-1.02 0-1.41l-2.34-2.34c-.39-.39-1.02-.39-1.41 0l-1.83 1.83 3.75 3.75 1.83-1.83z"/></svg>
<svg class="a" style="left:544px;top:1302px" width="64" height="64" viewBox="0 0 64 64"><defs><clipPath id="c5"><circle cx="32" cy="32" r="32"/></clipPath></defs><g clip-path="url(#c5)"><defs><radialGradient id="p6a" cx="0.5" cy="0.35" r="0.6"><stop offset="0" stop-color="#9a3050"/><stop offset="1" stop-color="#4e2230"/></radialGradient><radialGradient id="p6b" cx="0.5" cy="0.5" r="0.5"><stop offset="0" stop-color="#2a1a20" stop-opacity="0.9"/><stop offset="1" stop-color="#2a1a20" stop-opacity="0"/></radialGradient></defs><rect width="64" height="64" fill="url(#p6a)"/><ellipse cx="20" cy="18" rx="12" ry="8" fill="#c8476e" opacity="0.7"/><ellipse cx="46" cy="30" rx="14" ry="8" fill="#d0506e" opacity="0.6"/><rect x="0" y="34" width="34" height="12" fill="#c9665e" opacity="0.85"/><ellipse cx="10" cy="52" rx="10" ry="9" fill="#5f9c8c" opacity="0.7"/><ellipse cx="44" cy="50" r="12" rx="14" ry="10" fill="url(#p6b)"/><ellipse cx="28" cy="10" rx="10" ry="5" fill="url(#p6b)"/><circle cx="36" cy="46" r="2" fill="#e8c0c0"/><circle cx="30" cy="56" r="3" fill="#b07080" opacity="0.8"/></g></svg>
<div class="t lnk" style="left:641px;top:1314.0px"><span style="letter-spacing:-0.8px">00</span> <span style="letter-spacing:-0.8px">NN</span>-documentation (v<span style="letter-spacing:-0.8px">1</span>.<span style="letter-spacing:-0.8px">0</span>)</div>
<div class="t" style="left:1087px;top:1270.0px;"><span style="letter-spacing:-0.8px">V4</span> - <span style="letter-spacing:-0.8px">HTTP</span><br><span style="letter-spacing:-0.8px">P</span>roxy<br><span style="letter-spacing:-0.8px">G</span>ravitee</div>
<svg class="a" style="left:1327px;top:1305px" width="48" height="48" viewBox="0 0 48 48"><circle cx="24" cy="24" r="19.9" fill="none" stroke="#4fae78" stroke-width="3.6"/><path d="M19.5 17 L30.5 24 L19.5 31 Z" fill="none" stroke="#4fae78" stroke-width="3.6" stroke-linejoin="round"/></svg>
<div class="t" style="left:1527px;top:1314.0px;">/nn-documentation/</div>
<div class="t" style="left:2028px;top:1292.0px">china-<br>internet</div>
<div class="t" style="left:2273px;top:1290.5px"><span style="letter-spacing:-0.8px">NN</span> <span style="letter-spacing:-0.8px">C</span>ategory</div><div class="chip" style="left:2280px;top:1332.5px">1 More</div>
<svg class="a" style="left:2798px;top:1306px" width="52" height="48" viewBox="0 0 52 48"><g fill="none" stroke="#1f1e1f" stroke-width="4.3" stroke-linecap="round" stroke-linejoin="round"><path d="M8.2 31.7 A16 16 0 1 1 35.8 16.3 A11.2 11.2 0 0 1 43 37"/><path d="M19 33.6 L24.6 39.4 L35.1 29"/></g></svg>
<svg class="a" style="left:3013px;top:1305px" width="48" height="48" viewBox="0 0 24 24"><path fill="#2b2a2b" d="M12 2C6.48 2 2 6.48 2 12s4.48 10 10 10 10-4.48 10-10S17.52 2 12 2zm-1 17.93c-3.95-.49-7-3.85-7-7.93 0-.62.08-1.21.21-1.79L9 15v1c0 1.1.9 2 2 2v1.93zm6.9-2.54c-.26-.81-1-1.39-1.9-1.39h-1v-3c0-.55-.45-1-1-1H8v-2h2c.55 0 1-.45 1-1V7h2c1.1 0 2-.9 2-2v-.41c2.93 1.19 5 4.06 5 7.41 0 2.08-.8 3.97-2.1 5.39z"/></svg>
<svg class="a" style="left:3258px;top:1310px" width="48" height="48" viewBox="0 0 24 24"><path fill="#1f1e1f" d="M3 17.25V21h3.75L17.81 9.94l-3.75-3.75L3 17.25zM20.71 7.04c.39-.39.39-1.02 0-1.41l-2.34-2.34c-.39-.39-1.02-.39-1.41 0l-1.83 1.83 3.75 3.75 1.83-1.83z"/></svg>
<svg class="a" style="left:544px;top:1421px" width="64" height="64" viewBox="0 0 64 64"><defs><clipPath id="c6"><circle cx="32" cy="32" r="32"/></clipPath></defs><g clip-path="url(#c6)"><path fill="#e0b5dd" d="M24 0.5 L31.5 8 L24 15.5 L16.5 8 Z"/><path fill="#e0b5dd" d="M40 0.5 L47.5 8 L40 15.5 L32.5 8 Z"/><path fill="#e0b5dd" d="M8 16.5 L15.5 24 L8 31.5 L0.5 24 Z"/><path fill="#e0b5dd" d="M8 32.5 L15.5 40 L8 47.5 L0.5 40 Z"/><path fill="#e0b5dd" d="M56 16.5 L63.5 24 L56 31.5 L48.5 24 Z"/><path fill="#e0b5dd" d="M56 32.5 L63.5 40 L56 47.5 L48.5 40 Z"/><path fill="#e0b5dd" d="M24 48.5 L31.5 56 L24 63.5 L16.5 56 Z"/><path fill="#e0b5dd" d="M40 48.5 L47.5 56 L40 63.5 L32.5 56 Z"/><path fill="#c285bf" d="M8 0.5 L15.5 8 L8 15.5 L0.5 8 Z"/><path fill="#c285bf" d="M56 0.5 L63.5 8 L56 15.5 L48.5 8 Z"/><path fill="#c285bf" d="M8 48.5 L15.5 56 L8 63.5 L0.5 56 Z"/><path fill="#c285bf" d="M56 48.5 L63.5 56 L56 63.5 L48.5 56 Z"/><path fill="#555" d="M24 16 L32 16 L32 26 Z"/><path fill="#555" d="M48 20 L48 32 L36 32 Z"/><path fill="#555" d="M40 48 L32 48 L32 38 Z"/><path fill="#555" d="M16 44 L16 32 L28 32 Z"/></g></svg>
<div class="t lnk" style="left:641px;top:1433.0px"><span style="letter-spacing:-0.8px">01</span> <span style="letter-spacing:-0.8px">L</span>ilia <span style="letter-spacing:-0.8px">U</span>pdated (<span style="letter-spacing:-0.8px">3</span>.<span style="letter-spacing:-0.8px">1</span>)</div>
<div class="t" style="left:1087px;top:1411.0px;"><span style="letter-spacing:-0.8px">V2</span><br><span style="letter-spacing:-0.8px">G</span>ravitee</div>
<svg class="a" style="left:1327px;top:1424px" width="48" height="48" viewBox="0 0 48 48"><circle cx="24" cy="24" r="19.9" fill="none" stroke="#4fae78" stroke-width="3.6"/><path d="M19.5 17 L30.5 24 L19.5 31 Z" fill="none" stroke="#4fae78" stroke-width="3.6" stroke-linejoin="round"/></svg>
<div class="t" style="left:1527px;top:1433.0px;">/lilia</div>
<div class="qb" style="left:1895px;top:1417.5px;border-color:#a9443f;color:#b04a45">20%</div>
<div class="t" style="left:2028px;top:1409.5px">china</div><div class="chip" style="left:2035px;top:1451.5px">1 More</div>
<div class="t" style="left:2273px;top:1433.0px"><span style="letter-spacing:-0.8px">T</span>est <span style="letter-spacing:-0.8px">C</span>ateg</div>
<div class="t" style="left:2561px;top:1411.0px;"><span style="letter-spacing:-0.8px">A</span>dmin<br>master</div>
<svg class="a" style="left:2798px;top:1425px" width="52" height="48" viewBox="0 0 52 48"><g fill="none" stroke="#1f1e1f" stroke-width="4.3" stroke-linecap="round" stroke-linejoin="round"><path d="M8.2 31.7 A16 16 0 1 1 35.8 16.3 A11.2 11.2 0 0 1 43 37"/><path d="M19 33.6 L24.6 39.4 L35.1 29"/></g></svg>
<svg class="a" style="left:3013px;top:1424px" width="48" height="48" viewBox="0 0 24 24"><path fill="#2b2a2b" d="M18 8h-1V6c0-2.76-2.24-5-5-5S7 3.24 7 6v2H6c-1.1 0-2 .9-2 2v10c0 1.1.9 2 2 2h12c1.1 0 2-.9 2-2V10c0-1.1-.9-2-2-2zm-6 9c-1.1 0-2-.9-2-2s.9-2 2-2 2 .9 2 2-.9 2-2 2zm3.1-9H8.9V6c0-1.71 1.39-3.1 3.1-3.1 1.71 0 3.1 1.39 3.1 3.1v2z"/></svg>
<svg class="a" style="left:3258px;top:1429px" width="48" height="48" viewBox="0 0 24 24"><path fill="#1f1e1f" d="M3 17.25V21h3.75L17.81 9.94l-3.75-3.75L3 17.25zM20.71 7.04c.39-.39.39-1.02 0-1.41l-2.34-2.34c-.39-.39-1.02-.39-1.41 0l-1.83 1.83 3.75 3.75 1.83-1.83z"/></svg>
<svg class="a" style="left:544px;top:1525px" width="64" height="64" viewBox="0 0 64 64"><defs><clipPath id="c7"><circle cx="32" cy="32" r="32"/></clipPath></defs><g clip-path="url(#c7)"><defs><linearGradient id="p8" x1="0" y1="0" x2="0" y2="1"><stop offset="0" stop-color="#9d90b4"/><stop offset="0.25" stop-color="#c98fa0"/><stop offset="0.42" stop-color="#e49088"/><stop offset="0.6" stop-color="#a8c0d6"/><stop offset="0.8" stop-color="#b9d2da"/><stop offset="0.92" stop-color="#e79a80"/><stop offset="1" stop-color="#f0c0a0"/></linearGradient></defs><rect width="64" height="64" fill="url(#p8)"/><ellipse cx="44" cy="20" rx="12" ry="5" fill="#e28a8a" opacity="0.6"/><ellipse cx="52" cy="36" rx="12" ry="3" fill="#8a90a8" opacity="0.6"/><ellipse cx="16" cy="44" rx="8" ry="2" fill="#8a98a8" opacity="0.6"/><ellipse cx="48" cy="52" rx="12" ry="4" fill="#e98a6a" opacity="0.7"/></g></svg>
<div class="t lnk" style="left:641px;top:1537.0px"><span style="letter-spacing:-0.8px">01</span> <span style="letter-spacing:-0.8px">L</span>ilia <span style="letter-spacing:-0.8px">U</span>pdated (jourdi)</div>
<div class="t" style="left:1087px;top:1515.0px;"><span style="letter-spacing:-0.8px">V2</span><br><span style="letter-spacing:-0.8px">G</span>ravitee</div>
<svg class="a" style="left:1327px;top:1528px" width="48" height="48" viewBox="0 0 48 48"><circle cx="24" cy="24" r="19.9" fill="none" stroke="#4fae78" stroke-width="3.6"/><path d="M19.5 17 L30.5 24 L19.5 31 Z" fill="none" stroke="#4fae78" stroke-width="3.6" stroke-linejoin="round"/></svg>
<div class="t" style="left:1527px;top:1537.0px;">/duplicated<span style="letter-spacing:-0.8px">API</span>-jourdi</div>
<div class="qb" style="left:1895px;top:1521.5px;border-color:#e3a04a;color:#d99a4a">60%</div>
<div class="t" style="left:2028px;top:1513.5px">china</div><div class="chip" style="left:2035px;top:1555.5px">1 More</div>
<div class="t" style="left:2273px;top:1537.0px"><span style="letter-spacing:-0.8px">T</span>est <span style="letter-spacing:-0.8px">C</span>ateg</div>
<div class="t" style="left:2561px;top:1515.0px;"><span style="letter-spacing:-0.8px">A</span>dmin<br>master</div>
<svg class="a" style="left:2798px;top:1529px" width="52" height="48" viewBox="0 0 52 48"><g fill="none" stroke="#1f1e1f" stroke-width="4.3" stroke-linecap="round"><path d="M8.2 31.7 A16 16 0 1 1 35.8 16.3 A11.2 11.2 0 0 1 43 37"/><path d="M22.3 31.3 L29.7 38.7 M29.7 31.3 L22.3 38.7"/></g></svg>
<svg class="a" style="left:3013px;top:1528px" width="48" height="48" viewBox="0 0 24 24"><path fill="#2b2a2b" d="M18 8h-1V6c0-2.76-2.24-5-5-5S7 3.24 7 6v2H6c-1.1 0-2 .9-2 2v10c0 1.1.9 2 2 2h12c1.1 0 2-.9 2-2V10c0-1.1-.9-2-2-2zm-6 9c-1.1 0-2-.9-2-2s.9-2 2-2 2 .9 2 2-.9 2-2 2zm3.1-9H8.9V6c0-1.71 1.39-3.1 3.1-3.1 1.71 0 3.1 1.39 3.1 3.1v2z"/></svg>
<svg class="a" style="left:3258px;top:1533px" width="48" height="48" viewBox="0 0 24 24"><path fill="#1f1e1f" d="M3 17.25V21h3.75L17.81 9.94l-3.75-3.75L3 17.25zM20.71 7.04c.39-.39.39-1.02 0-1.41l-2.34-2.34c-.39-.39-1.02-.39-1.41 0l-1.83 1.83 3.75 3.75 1.83-1.83z"/></svg>
<svg class="a" style="left:544px;top:1629px" width="64" height="64" viewBox="0 0 64 64"><defs><clipPath id="c8"><circle cx="32" cy="32" r="32"/></clipPath></defs><g clip-path="url(#c8)"><ellipse cx="24" cy="8" rx="5.2" ry="6.3" fill="#565656"/><ellipse cx="40" cy="8" rx="5.2" ry="6.3" fill="#565656"/><ellipse cx="8" cy="24" rx="5.2" ry="6.3" fill="#565656"/><ellipse cx="8" cy="40" rx="5.2" ry="6.3" fill="#565656"/><ellipse cx="56" cy="24" rx="5.2" ry="6.3" fill="#565656"/><ellipse cx="56" cy="40" rx="5.2" ry="6.3" fill="#565656"/><ellipse cx="24" cy="56" rx="5.2" ry="6.3" fill="#565656"/><ellipse cx="40" cy="56" rx="5.2" ry="6.3" fill="#565656"/><path fill="#a87bcf" d="M16 5 L16 16 L10 10 Z"/><path fill="#a87bcf" d="M48 16 L60 16 L54 10 Z"/><path fill="#a87bcf" d="M48 48 L48 60 L54 54 Z"/><path fill="#a87bcf" d="M16 48 L4 48 L10 54 Z"/><rect x="16" y="16" width="32" height="32" fill="#a87bcf"/><path fill="#fff" d="M26 20 L32 26 L26 32 L20 26 Z"/><path fill="#fff" d="M38 20 L44 26 L38 32 L32 26 Z"/><path fill="#fff" d="M26 32 L32 38 L26 44 L20 38 Z"/><path fill="#fff" d="M38 32 L44 38 L38 44 L32 38 Z"/></g></svg>
<div class="t lnk" style="left:641px;top:1641.0px"><span style="letter-spacing:-0.8px">01</span> <span style="letter-spacing:-0.8px">L</span>ilia <span style="letter-spacing:-0.8px">U</span>pdated (<span style="letter-spacing:-0.8px">12345</span>)</div>
<div class="t" style="left:1087px;top:1619.0px;"><span style="letter-spacing:-0.8px">V2</span><br><span style="letter-spacing:-0.8px">G</span>ravitee</div>
<svg class="a" style="left:1327px;top:1632px" width="48" height="48" viewBox="0 0 48 48"><circle cx="24" cy="24" r="19.9" fill="none" stroke="#4fae78" stroke-width="3.6"/><path d="M19.5 17 L30.5 24 L19.5 31 Z" fill="none" stroke="#4fae78" stroke-width="3.6" stroke-linejoin="round"/></svg>
<div class="t" style="left:1527px;top:1641.0px;">/twe</div>
<div class="qb" style="left:1895px;top:1625.5px;border-color:#a9443f;color:#b04a45">20%</div>
<div class="t" style="left:2028px;top:1617.5px">china</div><div class="chip" style="left:2035px;top:1659.5px">1 More</div>
<div class="t" style="left:2273px;top:1617.5px"><span style="letter-spacing:-0.8px">T</span>est <span style="letter-spacing:-0.8px">C</span>ateg</div><div class="chip" style="left:2280px;top:1659.5px">1 More</div>
<div class="t" style="left:2561px;top:1619.0px;"><span style="letter-spacing:-0.8px">R</span><br><span style="letter-spacing:-0.8px">S</span></div>
<svg class="a" style="left:2798px;top:1633px" width="52" height="48" viewBox="0 0 52 48"><g fill="none" stroke="#1f1e1f" stroke-width="4.3" stroke-linecap="round" stroke-linejoin="round"><path d="M8.2 31.7 A16 16 0 1 1 35.8 16.3 A11.2 11.2 0 0 1 43 37"/><path d="M19 33.6 L24.6 39.4 L35.1 29"/></g></svg>
<svg class="a" style="left:3013px;top:1632px" width="48" height="48" viewBox="0 0 24 24"><path fill="#2b2a2b" d="M18 8h-1V6c0-2.76-2.24-5-5-5S7 3.24 7 6v2H6c-1.1 0-2 .9-2 2v10c0 1.1.9 2 2 2h12c1.1 0 2-.9 2-2V10c0-1.1-.9-2-2-2zm-6 9c-1.1 0-2-.9-2-2s.9-2 2-2 2 .9 2 2-.9 2-2 2zm3.1-9H8.9V6c0-1.71 1.39-3.1 3.1-3.1 1.71 0 3.1 1.39 3.1 3.1v2z"/></svg>
<svg class="a" style="left:3258px;top:1637px" width="48" height="48" viewBox="0 0 24 24"><path fill="#1f1e1f" d="M3 17.25V21h3.75L17.81 9.94l-3.75-3.75L3 17.25zM20.71 7.04c.39-.39.39-1.02 0-1.41l-2.34-2.34c-.39-.39-1.02-.39-1.41 0l-1.83 1.83 3.75 3.75 1.83-1.83z"/></svg>
<svg class="a" style="left:544px;top:1733px" width="64" height="64" viewBox="0 0 64 64"><defs><clipPath id="c9"><circle cx="32" cy="32" r="32"/></clipPath></defs><g clip-path="url(#c9)"><path fill="#555" d="M16 4 L32 16 L16 16 Z"/><path fill="#555" d="M32 0 L44 2 L32 16 Z"/><path fill="#555" d="M48 16 L60 16 L48 32 Z"/><path fill="#555" d="M48 32 L64 32 L62 44 Z"/><path fill="#555" d="M48 48 L32 48 L48 60 Z"/><path fill="#555" d="M32 48 L32 64 L20 62 Z"/><path fill="#555" d="M16 48 L4 48 L16 32 Z"/><path fill="#555" d="M16 32 L0 32 L2 20 Z"/><path fill="#c77a82" d="M26 16 L32 16 L32 28 Z"/><path fill="#c77a82" d="M48 26 L48 32 L36 32 Z"/><path fill="#c77a82" d="M38 48 L32 48 L32 36 Z"/><path fill="#c77a82" d="M16 38 L16 32 L28 32 Z"/><path fill="#c77a82" d="M8 0.5 L15.5 8 L8 15.5 L0.5 8 Z"/><path fill="#c77a82" d="M56 0.5 L63.5 8 L56 15.5 L48.5 8 Z"/><path fill="#c77a82" d="M8 48.5 L15.5 56 L8 63.5 L0.5 56 Z"/><path fill="#c77a82" d="M56 48.5 L63.5 56 L56 63.5 L48.5 56 Z"/></g></svg>
<div class="t lnk" style="left:641px;top:1745.0px"><span style="letter-spacing:-0.8px">01</span> <span style="letter-spacing:-0.8px">L</span>ilia <span style="letter-spacing:-0.8px">U</span>pdated (<span style="letter-spacing:-0.8px">1234</span>)</div>
<div class="t" style="left:1087px;top:1723.0px;"><span style="letter-spacing:-0.8px">V2</span><br><span style="letter-spacing:-0.8px">G</span>ravitee</div>
<svg class="a" style="left:1327px;top:1736px" width="48" height="48" viewBox="0 0 48 48"><circle cx="24" cy="24" r="19.9" fill="none" stroke="#c8312e" stroke-width="3.6"/><rect x="18" y="18" width="12" height="12" rx="1.5" fill="none" stroke="#c8312e" stroke-width="3.6"/></svg>
<svg class="a" style="left:1387px;top:1738px" width="56" height="52" viewBox="0 0 52 48"><g fill="none" stroke="#e8943a" stroke-width="3.8" stroke-linecap="round" stroke-linejoin="round"><path d="M8 13 C11 6 17.5 3 24 3 C31 3 36 6.5 40 11 L46 18"/><path d="M46 3 L46 18 L33 18"/><path d="M44 27 C41 34 34.5 37 28 37 C21 37 16 33.5 12 29 L6 22"/><path d="M6 37 L6 22 L19 22"/></g></svg>
<div class="t" style="left:1527px;top:1745.0px;">/mnhjk</div>
<div class="qb" style="left:1895px;top:1729.5px;border-color:#a9443f;color:#b04a45">20%</div>
<div class="t" style="left:2028px;top:1721.5px">china</div><div class="chip" style="left:2035px;top:1763.5px">1 More</div>
<div class="t" style="left:2273px;top:1745.0px"><span style="letter-spacing:-0.8px">T</span>est <span style="letter-spacing:-0.8px">C</span>ateg</div>
<div class="t" style="left:2561px;top:1723.0px;"><span style="letter-spacing:-0.8px">R</span><br><span style="letter-spacing:-0.8px">S</span></div>
<svg class="a" style="left:2798px;top:1737px" width="52" height="48" viewBox="0 0 52 48"><g fill="none" stroke="#1f1e1f" stroke-width="4.3" stroke-linecap="round"><path d="M8.2 31.7 A16 16 0 1 1 35.8 16.3 A11.2 11.2 0 0 1 43 37"/><path d="M22.3 31.3 L29.7 38.7 M29.7 31.3 L22.3 38.7"/></g></svg>
<svg class="a" style="left:3013px;top:1736px" width="48" height="48" viewBox="0 0 24 24"><path fill="#2b2a2b" d="M18 8h-1V6c0-2.76-2.24-5-5-5S7 3.24 7 6v2H6c-1.1 0-2 .9-2 2v10c0 1.1.9 2 2 2h12c1.1 0 2-.9 2-2V10c0-1.1-.9-2-2-2zm-6 9c-1.1 0-2-.9-2-2s.9-2 2-2 2 .9 2 2-.9 2-2 2zm3.1-9H8.9V6c0-1.71 1.39-3.1 3.1-3.1 1.71 0 3.1 1.39 3.1 3.1v2z"/></svg>
<svg class="a" style="left:3258px;top:1741px" width="48" height="48" viewBox="0 0 24 24"><path fill="#1f1e1f" d="M3 17.25V21h3.75L17.81 9.94l-3.75-3.75L3 17.25zM20.71 7.04c.39-.39.39-1.02 0-1.41l-2.34-2.34c-.39-.39-1.02-.39-1.41 0l-1.83 1.83 3.75 3.75 1.83-1.83z"/></svg>
<svg class="a" style="left:544px;top:1837px" width="64" height="64" viewBox="0 0 64 64"><defs><clipPath id="c10"><circle cx="32" cy="32" r="32"/></clipPath></defs><g clip-path="url(#c10)"><path fill="#555" d="M20 2.3 L32 0 L32 7.4 Z"/><path fill="#555" d="M40.4 15.6 L48 4 L48 15.6 Z"/><path fill="#555" d="M56 31.6 L61.4 20.3 L64 31.6 Z"/><path fill="#555" d="M48 40.4 L60 47.5 L48 47.5 Z"/><path fill="#555" d="M32 56.3 L44 61.4 L32 64 Z"/><path fill="#555" d="M16 48.2 L23.6 48.2 L16 60 Z"/><path fill="#555" d="M0 32 L7.4 32 L2.3 43.7 Z"/><path fill="#555" d="M4 16 L15.8 16 L15.8 23 Z"/><path fill="#8b9fd6" d="M24.2 16 L32 16 L32 27 Z"/><path fill="#8b9fd6" d="M37.3 31.5 L48 24.2 L48 31.5 Z"/><path fill="#8b9fd6" d="M32 36.8 L39.8 47.7 L32 47.7 Z"/><path fill="#8b9fd6" d="M16 32 L27 32 L16 39.8 Z"/><path fill="#8b9fd6" d="M8 0.5 L15.5 8 L8 15.5 L0.5 8 Z"/><path fill="#8b9fd6" d="M56 0.5 L63.5 8 L56 15.5 L48.5 8 Z"/><path fill="#8b9fd6" d="M8 48.5 L15.5 56 L8 63.5 L0.5 56 Z"/><path fill="#8b9fd6" d="M56 48.5 L63.5 56 L56 63.5 L48.5 56 Z"/></g></svg>
<div class="t lnk" style="left:641px;top:1849.0px"><span style="letter-spacing:-0.8px">01</span> <span style="letter-spacing:-0.8px">L</span>ilia <span style="letter-spacing:-0.8px">U</span>pdated (<span style="letter-spacing:-0.8px">1</span>)</div>
<div class="t" style="left:1087px;top:1827.0px;"><span style="letter-spacing:-0.8px">V2</span><br><span style="letter-spacing:-0.8px">G</span>ravitee</div>
<svg class="a" style="left:1327px;top:1840px" width="48" height="48" viewBox="0 0 48 48"><circle cx="24" cy="24" r="19.9" fill="none" stroke="#c8312e" stroke-width="3.6"/><rect x="18" y="18" width="12" height="12" rx="1.5" fill="none" stroke="#c8312e" stroke-width="3.6"/></svg>
<svg class="a" style="left:1387px;top:1842px" width="56" height="52" viewBox="0 0 52 48"><g fill="none" stroke="#e8943a" stroke-width="3.8" stroke-linecap="round" stroke-linejoin="round"><path d="M8 13 C11 6 17.5 3 24 3 C31 3 36 6.5 40 11 L46 18"/><path d="M46 3 L46 18 L33 18"/><path d="M44 27 C41 34 34.5 37 28 37 C21 37 16 33.5 12 29 L6 22"/><path d="M6 37 L6 22 L19 22"/></g></svg>
<div class="t" style="left:1527px;top:1849.0px;">/ters</div>
<div class="qb" style="left:1895px;top:1833.5px;border-color:#a9443f;color:#b04a45">20%</div>
<div class="t" style="left:2028px;top:1825.5px">china</div><div class="chip" style="left:2035px;top:1867.5px">1 More</div>
<div class="t" style="left:2273px;top:1849.0px"><span style="letter-spacing:-0.8px">T</span>est <span style="letter-spacing:-0.8px">C</span>ateg</div>
<div class="t" style="left:2561px;top:1849.0px;"><span style="letter-spacing:-0.8px">K</span>&nbsp;&nbsp;&nbsp;&nbsp;&nbsp;<span style="letter-spacing:-0.8px">K</span></div>
<svg class="a" style="left:2798px;top:1841px" width="52" height="48" viewBox="0 0 52 48"><g fill="none" stroke="#1f1e1f" stroke-width="4.3" stroke-linecap="round" stroke-linejoin="round"><path d="M8.2 31.7 A16 16 0 1 1 35.8 16.3 A11.2 11.2 0 0 1 43 37"/><path d="M19 33.6 L24.6 39.4 L35.1 29"/></g></svg>
<svg class="a" style="left:3013px;top:1840px" width="48" height="48" viewBox="0 0 24 24"><path fill="#2b2a2b" d="M18 8h-1V6c0-2.76-2.24-5-5-5S7 3.24 7 6v2H6c-1.1 0-2 .9-2 2v10c0 1.1.9 2 2 2h12c1.1 0 2-.9 2-2V10c0-1.1-.9-2-2-2zm-6 9c-1.1 0-2-.9-2-2s.9-2 2-2 2 .9 2 2-.9 2-2 2zm3.1-9H8.9V6c0-1.71 1.39-3.1 3.1-3.1 1.71 0 3.1 1.39 3.1 3.1v2z"/></svg>
<svg class="a" style="left:3258px;top:1845px" width="48" height="48" viewBox="0 0 24 24"><path fill="#1f1e1f" d="M3 17.25V21h3.75L17.81 9.94l-3.75-3.75L3 17.25zM20.71 7.04c.39-.39.39-1.02 0-1.41l-2.34-2.34c-.39-.39-1.02-.39-1.41 0l-1.83 1.83 3.75 3.75 1.83-1.83z"/></svg>
<div class="a" style="left:3426px;top:142px;width:30px;height:1776px;background:#fafafa;border-left:2px solid #e6e6e6"></div>
<div class="a" style="left:3434px;top:148px;width:16px;height:858px;border-radius:8px;background:#c1c1c1"></div></body></html>
